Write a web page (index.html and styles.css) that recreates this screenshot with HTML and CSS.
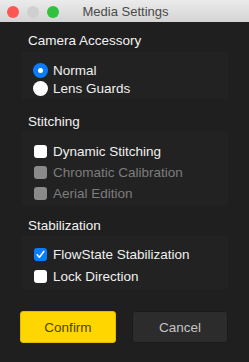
FILE: index.html
```html
<!DOCTYPE html>
<html lang="en">
<head>
    <meta charset="UTF-8">
    <title>Media Settings</title>
    <link rel="stylesheet" href="styles.css">
</head>
<body>
    <div class="window">
        <div class="titlebar">
            <div class="lights">
                <span class="light red"></span>
                <span class="light gray"></span>
                <span class="light green"></span>
            </div>
            <div class="title">Media Settings</div>
        </div>

        <div class="content">
            <div class="section first">
                <div class="section-title">Camera Accessory</div>
                <div class="group radios">
                    <div class="row"><span class="radio on"></span>Normal</div>
                    <div class="row"><span class="radio"></span>Lens Guards</div>
                </div>
            </div>

            <div class="section second">
                <div class="section-title">Stitching</div>
                <div class="group checks">
                    <div class="row"><span class="check"></span>Dynamic Stitching</div>
                    <div class="row disabled"><span class="check"></span>Chromatic Calibration</div>
                    <div class="row disabled"><span class="check"></span>Aerial Edition</div>
                </div>
            </div>

            <div class="section third">
                <div class="section-title">Stabilization</div>
                <div class="group checks tall">
                    <div class="row">
                        <span class="check on">
                            <svg width="13" height="13" viewBox="0 0 13 13"><path d="M3.2 6.8 L5.4 9.2 L9.8 3.4" fill="none" stroke="#fff" stroke-width="1.6" stroke-linecap="round" stroke-linejoin="round"/></svg>
                        </span>FlowState Stabilization
                    </div>
                    <div class="row"><span class="check"></span>Lock Direction</div>
                </div>
            </div>

            <div class="buttons">
                <button class="btn confirm">Confirm</button>
                <button class="btn cancel">Cancel</button>
            </div>
        </div>
    </div>
</body>
</html>
```

FILE: styles.css
```css
body {
    margin: 0;
    padding: 0;
    background-color: #1f1f1f;
    font-family: 'Liberation Sans', Arial, sans-serif;
    font-size: 13.5px;
}

.window {
    width: 249px;
    height: 362px;
    background-color: #1f1f1f;
    overflow: hidden;
}

.titlebar {
    height: 22px;
    background: linear-gradient(#ebebeb, #d4d4d4);
    position: relative;
    display: flex;
    align-items: center;
    justify-content: center;
}

.lights {
    position: absolute;
    left: 7px;
    top: 6px;
    display: flex;
    gap: 8px;
}

.light {
    width: 12px;
    height: 12px;
    border-radius: 50%;
}

.light.red { background-color: #fc5753; }
.light.gray { background-color: #cfcfcf; }
.light.green { background-color: #2fc13f; }

.title {
    color: #4a4a4a;
    font-size: 13px;
    padding-left: 2px;
}

.content {
    padding: 0 21px 0 20px;
}

.section-title {
    color: #f2f2f2;
    height: 16px;
    line-height: 16px;
    padding-left: 8px;
}

.first .section-title { margin-top: 11px; }
.second .section-title { margin-top: 15px; }
.third .section-title { margin-top: 12px; }

.group {
    background-color: #222222;
    margin-left: 2px;
    padding: 9px 0 2px 11px;
}

.first .group { margin-top: 3px; }
.second .group { margin-top: 1px; padding-top: 10px; }
.third .group { margin-top: 2px; padding-top: 7px; }

.row {
    display: flex;
    align-items: center;
    color: #f0f0f0;
    height: 21px;
}

.radios .row { height: 18px; }
.tall .row { height: 22px; }

.row.disabled { color: #7d7d7d; }

.radio {
    width: 15px;
    height: 15px;
    border-radius: 50%;
    background-color: #fff;
    margin-right: 5px;
    display: flex;
    align-items: center;
    justify-content: center;
}

.radio.on { background-color: #0a7cff; }

.radio.on::after {
    content: "";
    width: 5px;
    height: 5px;
    border-radius: 50%;
    background-color: #fff;
}

.check {
    width: 13px;
    height: 13px;
    border-radius: 3px;
    background-color: #fff;
    margin: 0 6px 0 1px;
    display: flex;
}

.disabled .check { background-color: #8a8a8a; }
.check.on { background-color: #0a7cff; }

.buttons {
    display: flex;
    gap: 16px;
    margin-top: 22px;
}

.btn {
    width: 96px;
    height: 32px;
    border-radius: 3px;
    font-family: 'Liberation Sans', Arial, sans-serif;
    font-size: 13.5px;
    cursor: pointer;
}

.confirm {
    background-color: #ffd600;
    border: 1px solid #e0bb00;
    color: #4f4300;
}

.cancel {
    background-color: #2c2c2c;
    border: 1px solid #1a1a1a;
    color: #c4c4c4;
}
```
